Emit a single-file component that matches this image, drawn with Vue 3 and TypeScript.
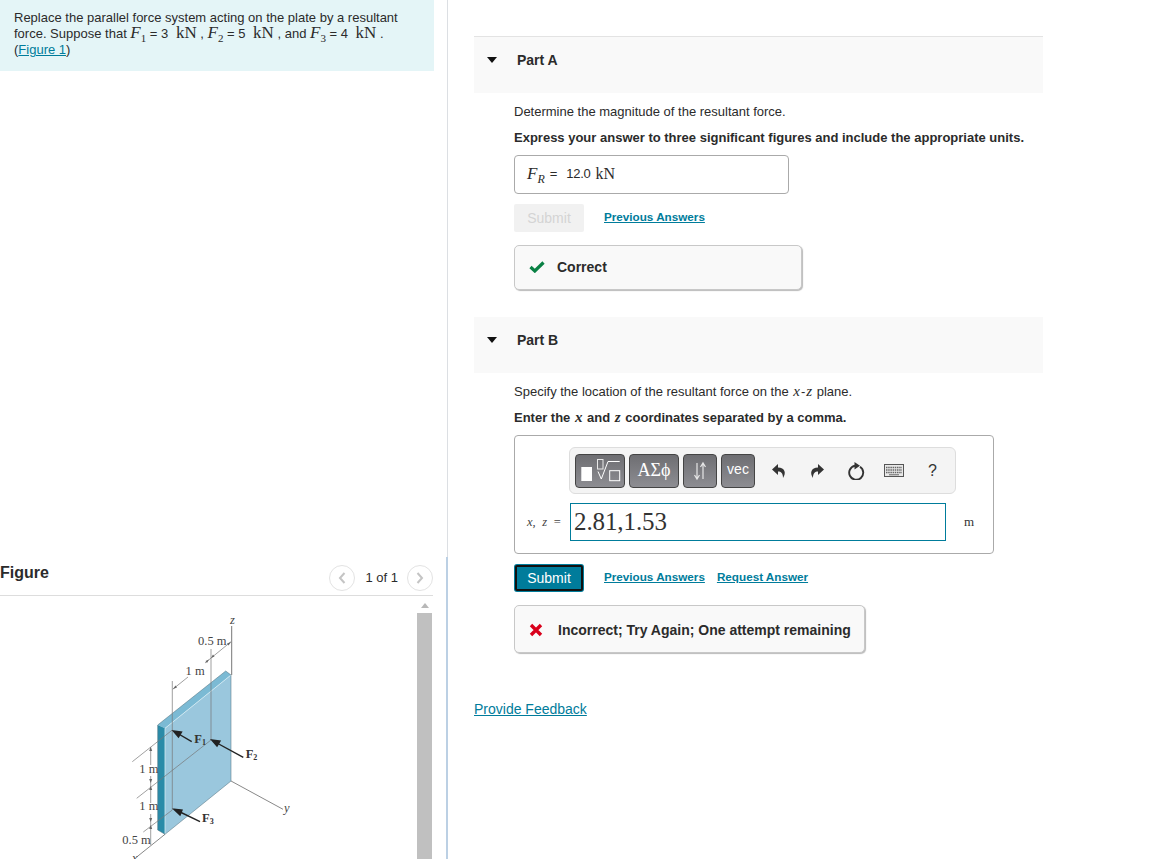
<script setup lang="ts">
const dimTicks: string[] = [
  'M150.700 747l-1.500 4h3Z',
  'M150.700 783l-1.500-4h3Z',
  'M150.700 786l-1.500 4h3Z',
  'M150.700 822l-1.500-4h3Z',
  'M150.700 825l-1.500 4h3Z',
  'M231 642l-4 1.500 1.500 2Z',
  'M211 658l3.500-1.500-1.500-2Z',
  'M209 659.500l-3.500 1.500 1.500 2Z',
  'M173 689l4-1.500-1.500-2Z',
]
</script>

<template>
  <div class="page">
    <aside class="left">
      <div class="intro">
        Replace the parallel force system acting on the plate by a resultant<br />
        force. Suppose that <span class="m"><i>F</i><sub>1</sub></span> = 3 <span class="m unit">kN</span> , <span class="m"><i>F</i><sub>2</sub></span> = 5 <span class="m unit">kN</span> , and <span class="m"><i>F</i><sub>3</sub></span> = 4 <span class="m unit">kN</span> .<br />
        (<a href="#">Figure 1</a>)
      </div>
      <div class="fig-head">
        <strong>Figure</strong>
        <div class="pager">
          <span class="circle"><svg width="8" height="12" viewBox="0 0 8 12"><path d="M6.500 1 2 6l4.500 5" fill="none" stroke="#c4c4c4" stroke-width="2" /></svg></span>
          <span class="count">1 of 1</span>
          <span class="circle"><svg width="8" height="12" viewBox="0 0 8 12"><path d="M1.500 1 6 6l-4.500 5" fill="none" stroke="#c4c4c4" stroke-width="2" /></svg></span>
        </div>
      </div>
      <div class="fig-body">
        <svg class="diagram" width="417" height="263" viewBox="0 596 417 263">
          <polygon points="157.700,725 225.700,671 231,675 165,728.300" fill="#7bbad4" />
          <polygon points="157.700,725 165,728.300 165,834.300 157.700,830" fill="#2a8ba8" />
          <polygon points="165,728.300 231,675 231,781 165,834.300" fill="#9ac7dd" />
          <path d="M165 728.300 231 675M165 728.300V834.300" fill="none" stroke="#d6ecf4" stroke-width="0.8" />
          <path d="M157.700 725 225.700 671 231 675V781L165 834.300 157.700 830Z" fill="none" stroke="#4a6a78" stroke-width="0.5" />
          <g fill="none" stroke="#777" stroke-width="0.7">
            <path d="M231.700 626V675" stroke-width="1" />
            <path d="M231 781 283 809.300" stroke="#555" />
            <path d="M165 834.300 136.700 857" stroke="#555" />
            <path d="M231 641.700 205 663M188 677 172.700 689.300" />
            <path d="M211 649V740" />
            <path d="M172.300 681V810" />
            <path d="M132.300 761.700 172.300 730" />
            <path d="M136.700 798.300 211 740" />
            <path d="M143.300 832 172.300 810" />
            <path d="M150.700 747V765M150.700 776V803M150.700 814V845" />
          </g>
          <path v-for="d in dimTicks" :key="d" :d="d" fill="#666" />
          <g stroke="#222" stroke-width="1.400" fill="#222">
            <path d="M191.700 741.700 177 733" /><path d="M173.300 731 181.500 732 178.500 737Z" />
            <path d="M243.300 757.300 216 742.500" /><path d="M211.700 740 220 741 217 746Z" />
            <path d="M200 821.700 178 811" /><path d="M174 809.300 182 810 180 815Z" />
          </g>
          <g class="lbl">
            <text x="230" y="624" class="it">z</text>
            <text x="198" y="645">0.5 m</text>
            <text x="185.500" y="675">1 m</text>
            <text x="139.300" y="772.500">1 m</text>
            <text x="139.300" y="810">1 m</text>
            <text x="122.300" y="843.500">0.5 m</text>
            <text x="284" y="812" class="it">y</text>
            <text x="132" y="862" class="it">x</text>
            <text x="194.300" y="743" class="b">F<tspan class="s" dy="2">1</tspan></text>
            <text x="245.700" y="758" class="b">F<tspan class="s" dy="2">2</tspan></text>
            <text x="202" y="822" class="b">F<tspan class="s" dy="2">3</tspan></text>
          </g>
        </svg>
        <div class="scroll">
          <span class="arrow"></span>
          <span class="thumb"></span>
        </div>
      </div>
    </aside>

    <main class="right">
      <section class="part part-a">
        <header class="part-head top">
          <span class="tri"></span><strong>Part A</strong>
        </header>
        <div class="part-body">
          <p class="q">Determine the magnitude of the resultant force.</p>
          <p class="ins">Express your answer to three significant figures and include the appropriate units.</p>
          <div class="answer">
            <span class="m big"><i>F</i><sub><i>R</i></sub></span><span class="eq">=</span><span class="val">12.0</span><span class="m unit big">kN</span>
          </div>
          <div class="actions">
            <button class="submit off" disabled>Submit</button>
            <a href="#" class="link">Previous Answers</a>
          </div>
          <div class="fb ok">
            <svg width="16" height="12" viewBox="0 0 16 12"><path d="M1.500 6 5.800 10 14.500 1.500" fill="none" stroke="#0a8144" stroke-width="3.200" /></svg>
            <strong>Correct</strong>
          </div>
        </div>
      </section>

      <section class="part">
        <header class="part-head">
          <span class="tri"></span><strong>Part B</strong>
        </header>
        <div class="part-body">
          <p class="q">Specify the location of the resultant force on the <i class="v">x</i>-<i class="v">z</i> plane.</p>
          <p class="ins">Enter the <i class="v">x</i> and <i class="v">z</i> coordinates separated by a comma.</p>
          <div class="editor">
            <div class="toolbar">
              <span class="tb w50">
                <svg width="48" height="32" viewBox="0 0 48 32">
                  <rect x="5.300" y="12" width="10.700" height="14" fill="#fff" />
                  <rect x="21.500" y="4.500" width="5.500" height="9.500" fill="none" stroke="#e8e8e8" />
                  <path d="M22 16.500 25.300 24 32 6.500H43.700" fill="none" stroke="#fff" />
                  <rect x="33.700" y="15.700" width="10" height="10" fill="none" stroke="#fff" />
                </svg>
              </span>
              <span class="tb w50 greek">ΑΣϕ</span>
              <span class="tb w34">
                <svg width="20" height="22" viewBox="0 0 20 22"><path d="M7 3V18M4.500 15 7 19l2.500-4M13 19V4M10.500 7 13 3l2.500 4" fill="none" stroke="#e6e6e6" stroke-width="1.200" /></svg>
              </span>
              <span class="tb w34 vec">vec</span>
              <span class="ti lead">
                <svg width="16" height="16" viewBox="0 0 16 16"><path d="M7 1 1 6.500 7 12V8.500C10 8.500 12 10 12 15 15.500 10 14 4.500 7 4.500Z" fill="#333" /></svg>
              </span>
              <span class="ti">
                <svg width="16" height="16" viewBox="0 0 16 16"><path d="M9 1 15 6.500 9 12V8.500C6 8.500 4 10 4 15 .5 10 2 4.500 9 4.500Z" fill="#333" /></svg>
              </span>
              <span class="ti reset">
                <svg width="18" height="18" viewBox="0 0 18 18"><path d="M13 4.800A7 7 0 1 1 8 3.800" fill="none" stroke="#333" stroke-width="1.900" /><path d="M7.500 0 13 3.800 7.500 7.500Z" fill="#333" /></svg>
              </span>
              <span class="ti">
                <svg width="20" height="13" viewBox="0 0 20 13"><rect x="0.500" y="0.500" width="19" height="12" fill="#e8e8e8" stroke="#555" /><path d="M2 3.500h16M2 6h16M2 8.500h16" stroke="#666" stroke-width="1.300" stroke-dasharray="1.500 0.700" fill="none" /><path d="M5 10.800h10" stroke="#666" /></svg>
              </span>
              <span class="ti help">?</span>
            </div>
            <div class="input-row">
              <span class="xz"><i>x</i>, <i>z</i> =</span>
              <div class="field">2.81,1.53</div>
              <span class="unit-m">m</span>
            </div>
          </div>
          <div class="actions">
            <button class="submit on">Submit</button>
            <a href="#" class="link">Previous Answers</a>
            <a href="#" class="link">Request Answer</a>
          </div>
          <div class="fb bad">
            <svg width="14" height="14" viewBox="0 0 14 14"><path d="M2 2 12 12M12 2 2 12" stroke="#d9001b" stroke-width="3.400" fill="none" /></svg>
            <strong>Incorrect; Try Again; One attempt remaining</strong>
          </div>
        </div>
      </section>
      <a href="#" class="feedback">Provide Feedback</a>
    </main>
  </div>
</template>

<style>
body { margin: 0; background: #fff; }
</style>

<style scoped>
.page {
  display: flex;
  width: 1152px;
  height: 859px;
  overflow: hidden;
  font-family: "Liberation Sans", Arial, sans-serif;
  font-size: 13px;
  color: #2b2b2b;
}
a { color: #007c9b; }
.left {
  position: relative;
  width: 447px;
  flex: none;
  border-right: 1px solid #dcdfe3;
  display: flex;
  flex-direction: column;
}
.left::after {
  content: "";
  position: absolute;
  top: 557px;
  bottom: 0;
  left: 446px;
  width: 2px;
  background: #bcd0e4;
}
.intro {
  width: 434px;
  height: 71px;
  box-sizing: border-box;
  padding: 10px 0 0 14px;
  background: #e4f5f7;
  line-height: 16px;
  font-size: 13px;
  white-space: nowrap;
}
.m { font-family: "Liberation Serif", serif; font-size: 17px; line-height: 0; }
.m sub { font-size: 11px; line-height: 0; }
.unit { margin: 0 0 0 4px; }
.fig-head {
  margin-top: 485px;
  height: 40px;
  width: 433px;
  display: flex;
  align-items: center;
  justify-content: space-between;
  border-bottom: 1px solid #ddd;
  box-sizing: border-box;
}
.fig-head strong { font-size: 16px; margin-bottom: 6px; }
.pager { display: flex; align-items: center; gap: 10px; font-size: 13px; margin-top: 4px; }
.count { margin-right: -1px; }
.circle {
  width: 24px;
  height: 24px;
  border: 1px solid #e3e3e3;
  border-radius: 50%;
  display: flex;
  align-items: center;
  justify-content: center;
}
.fig-body { flex: 1; display: flex; min-height: 0; width: 433px; }
.diagram { display: block; flex: none; }
.lbl text { font-family: "Liberation Serif", serif; font-size: 12.500px; fill: #444; }
.lbl .it { font-style: italic; }
.lbl .b { font-weight: 700; font-size: 12.500px; fill: #333; }
.lbl .s { font-size: 8px; }
.scroll { width: 15px; display: flex; flex-direction: column; align-items: center; }
.arrow {
  margin: 7px 0 5px;
  width: 0; height: 0;
  border-left: 4px solid transparent;
  border-right: 4px solid transparent;
  border-bottom: 5px solid #b8b8b8;
}
.thumb { width: 15px; flex: 1; background: #c0c0c0; }

.right { width: 569px; margin-left: 26px; flex: none; padding-top: 36px; }
.part-head {
  height: 56px;
  background: #f9f9f9;
  display: flex;
  align-items: center;
  gap: 20px;
  padding: 0 0 11px 13px;
  box-sizing: border-box;
}
.part-head.top { height: 57px; border-top: 1px solid #e3e3e3; }
.part-head strong { font-size: 14px; }
.tri {
  width: 0; height: 0;
  border-left: 5.500px solid transparent;
  border-right: 5.500px solid transparent;
  border-top: 6px solid #111;
}
.part-body { padding: 11px 0 0 40px; }
.part-a { height: 281px; }
.q { margin: 0; line-height: 16px; }
.ins { margin: 10px 0 0; line-height: 16px; font-weight: 700; }
.v { font-family: "Liberation Serif", serif; font-style: italic; font-size: 15px; line-height: 0; margin: 0 1px; }
.answer {
  margin-top: 9px;
  width: 275px;
  height: 39px;
  box-sizing: border-box;
  border: 1px solid #aaa;
  border-radius: 4px;
  display: flex;
  align-items: center;
  padding: 0 0 2px 12px;
}
.big { font-size: 17px; line-height: normal; }
.big sub { font-size: 12px; }
.eq { margin: 0 9px 0 5px; font-size: 13px; }
.val { font-size: 13px; letter-spacing: -0.300px; }
.answer .unit { font-size: 16px; margin-left: 5px; }
.actions { margin-top: 10px; height: 28px; display: flex; align-items: center; gap: 12px; }
.link { font-size: 11.700px; font-weight: 700; color: #007c9b; margin-bottom: 3px; }
.actions .link:nth-child(2) { margin-left: 8px; }
.submit {
  width: 70px;
  height: 28px;
  border: 0;
  border-radius: 2px;
  font: 14px "Liberation Sans", Arial, sans-serif;
  padding: 0;
}
.off { background: #f1f1f1; color: #d4d4d4; }
.on {
  background: #007c9b;
  color: #fff;
  outline: 2px solid #111;
  outline-offset: -2px;
  box-shadow: 0 0 0 1px #007c9b;
  margin: 0 1px;
  width: 68px;
  height: 26px;
}
.fb {
  margin-top: 13px;
  background: #f9f9f9;
  border: 1px solid #c8c8c8;
  border-radius: 5px;
  box-shadow: 1px 1px 1px #bbb;
  display: flex;
  align-items: center;
  box-sizing: border-box;
}
.fb strong { font-size: 14px; }
.ok { width: 288px; height: 45px; padding: 0 0 1px 14px; gap: 12px; }
.bad { width: 351px; height: 48px; padding: 1px 0 0 14px; gap: 15px; }
.editor {
  margin-top: 9px;
  width: 480px;
  height: 119px;
  box-sizing: border-box;
  border: 1px solid #aaa;
  border-radius: 4px;
  padding: 11px 0 0 54px;
}
.toolbar {
  width: 387px;
  height: 47px;
  box-sizing: border-box;
  background: #f4f4f4;
  border: 1px solid #ddd;
  border-radius: 6px;
  display: flex;
  align-items: center;
  padding-left: 5px;
  gap: 4px;
}
.tb {
  flex: none;
  height: 34px;
  box-sizing: border-box;
  border: 1px solid #444;
  border-radius: 4px;
  background: linear-gradient(#6e6e72, #8d8d92);
  color: #fff;
  display: flex;
  align-items: center;
  justify-content: center;
}
.w50 { width: 50px; }
.w34 { width: 34px; }
.greek { font-family: "Liberation Serif", serif; font-size: 18px; }
.vec { font-size: 14px; padding-bottom: 3px; }
.ti { width: 34.300px; flex: none; display: flex; justify-content: center; align-items: center; }
.lead { margin-left: 3px; }
.reset { padding-left: 1px; box-sizing: border-box; }
.help { font-size: 16px; color: #333; }
.input-row { display: flex; align-items: center; margin: 9px 0 0 -44px; }
.xz { width: 45px; box-sizing: border-box; padding-left: 2px; font: 12.500px "Liberation Serif", serif; color: #444; word-spacing: 3.500px; white-space: nowrap; }
.field {
  width: 376px;
  height: 38px;
  box-sizing: border-box;
  border: 1px solid #007c9b;
  padding-left: 3px;
  font: 25px/36px "Liberation Serif", serif;
  letter-spacing: -0.100px;
  color: #333;
}
.unit-m { margin-left: 18px; font: 13px "Liberation Serif", serif; color: #333; }
.feedback { display: inline-block; margin-top: 48px; font-size: 14px; }
</style>
